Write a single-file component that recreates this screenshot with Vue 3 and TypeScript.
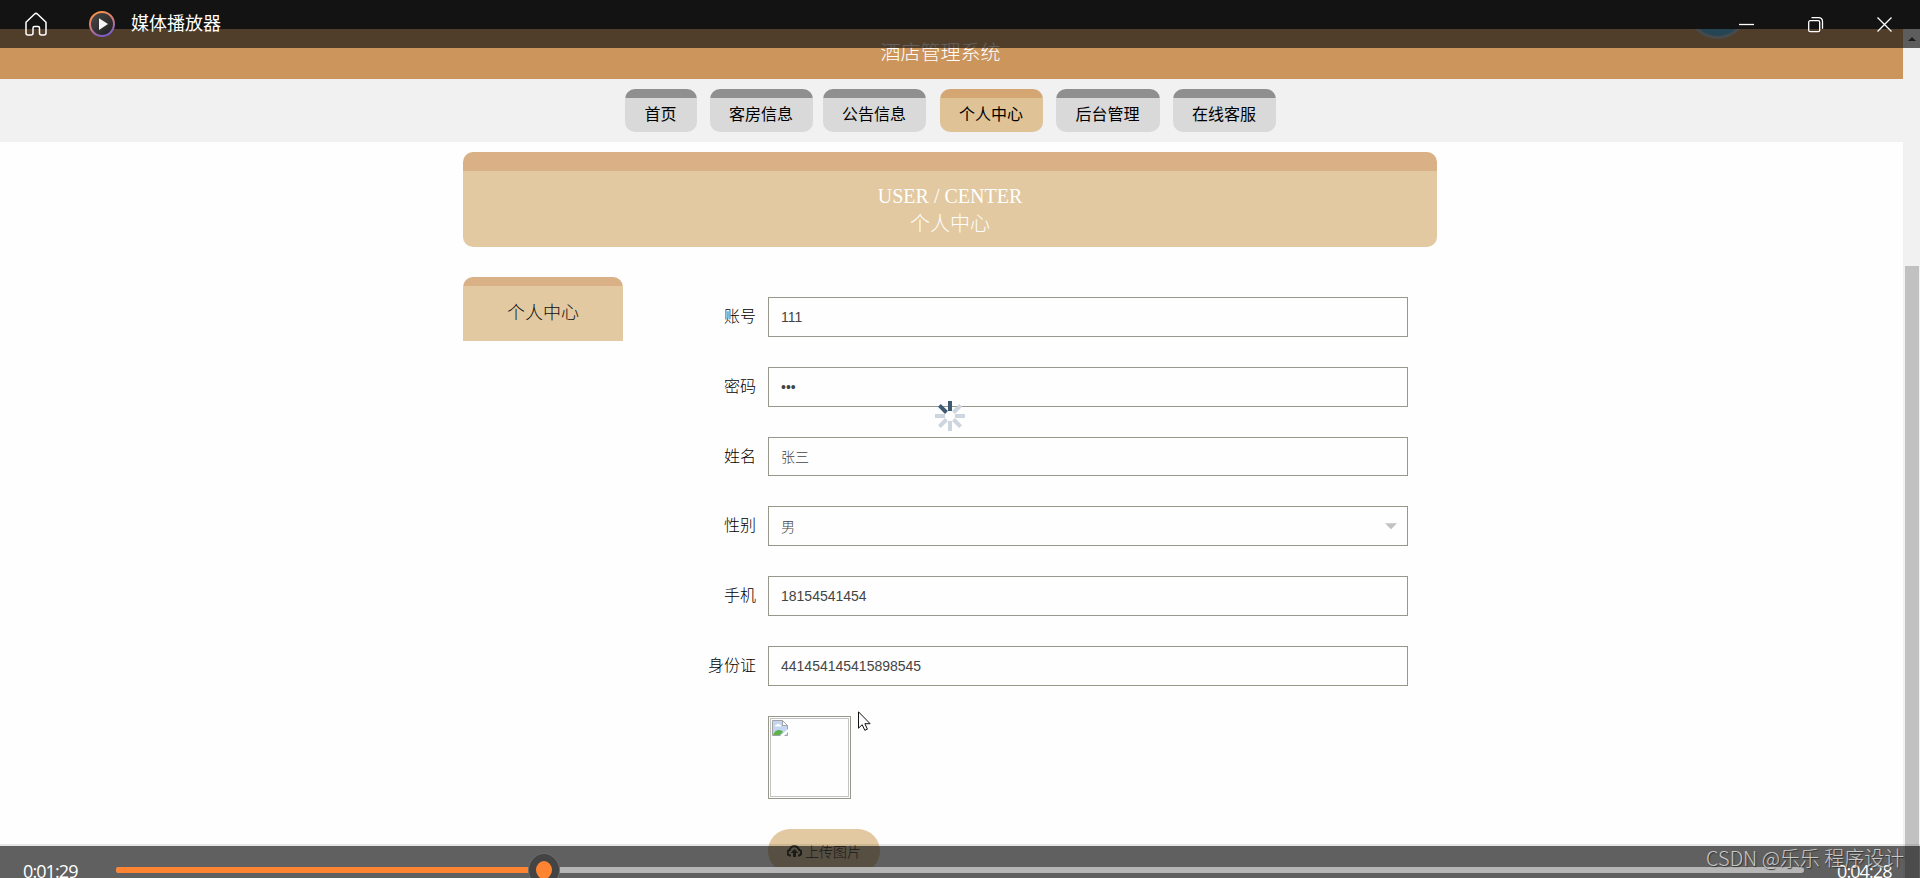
<script setup lang="ts">
interface Tab { label: string; active?: boolean }
interface Field { label: string; value: string; kind?: 'password' | 'select' }

const tabs: Tab[] = [
  { label: '首页' },
  { label: '客房信息' },
  { label: '公告信息' },
  { label: '个人中心', active: true },
  { label: '后台管理' },
  { label: '在线客服' },
]

const fields: Field[] = [
  { label: '账号', value: '111' },
  { label: '密码', value: '•••', kind: 'password' },
  { label: '姓名', value: '张三' },
  { label: '性别', value: '男', kind: 'select' },
  { label: '手机', value: '18154541454' },
  { label: '身份证', value: '441454145415898545' },
]

const spokes = [0, 45, 90, 135, 180, 225, 270, 315]
</script>

<template>
  <div class="screen">
    <div class="viewport">
      <main class="page">
        <header class="site-header">
          <span class="site-title">酒店管理系统</span>
          <span class="avatar"></span>
        </header>
        <nav class="nav">
          <a v-for="t in tabs" :key="t.label" class="tab" :class="{ active: t.active }">{{ t.label }}</a>
        </nav>
        <section class="banner">
          <div class="banner-en">USER / CENTER</div>
          <div class="banner-cn">个人中心</div>
        </section>
        <div class="columns">
          <aside class="side">个人中心</aside>
          <form class="form">
            <div v-for="f in fields" :key="f.label" class="row">
              <label class="label">{{ f.label }}</label>
              <div class="input" :class="f.kind">
                <span>{{ f.value }}</span>
                <i v-if="f.kind === 'select'" class="caret"></i>
              </div>
            </div>
            <div class="photo">
              <div class="photo-inner">
                <svg width="16" height="16" viewBox="0 0 16 16">
                  <path d="M.5.5h10l5 5v10H.5z" fill="#c3d5f2" stroke="#a3a3a3" />
                  <path d="M10.5.5v5h5z" fill="#fff" stroke="#a3a3a3" />
                  <path d="M3 6.500q0-2 2-2 1-1.500 2.500 0 1.500 0 1.500 2z" fill="#fff" />
                  <path d="M1 15q2-5 6-5 3 0 4 2l-3 3z" fill="#5cb347" />
                  <path d="M8 16l8-7v3l-4 4z" fill="#fff" />
                </svg>
              </div>
            </div>
            <div class="upload">
              <svg width="15" height="12" viewBox="0 0 15 12">
                <path d="M4 10.500H3A2.800 2.800 0 0 1 2.700 5 4.800 4.800 0 0 1 12 4.700a3 3 0 0 1 0 5.800h-1" fill="none" stroke="#2d2921" stroke-width="2.200" />
                <path d="M7.500 4l4 4H9v4H6V8H3.500z" fill="#2d2921" />
              </svg>
              <span>上传图片</span>
            </div>
          </form>
        </div>
      </main>
      <div class="scrollbar">
        <i class="arrow"></i>
        <i class="thumb"></i>
      </div>
    </div>

    <svg class="spinner" width="32" height="32" viewBox="-16 -16 32 32">
      <line v-for="a in spokes" :key="a" x1="0" y1="-5" x2="0" y2="-15" stroke-width="4"
        :stroke="a === 0 || a === 315 ? '#3d5b75' : '#cdd6df'" :transform="`rotate(${a})`" />
    </svg>

    <svg class="cursor" width="14" height="21" viewBox="0 0 14 21">
      <path d="M.5.8v16.400l3.700-3.500 2.600 5.600 2.600-1.100-2.500-5.500h5.200z" fill="#fff" stroke="#111" />
    </svg>

    <div class="titlebar">
      <svg class="home" width="24" height="25" viewBox="0 0 24 25">
        <path d="M2 10.300 10.600 2q1.400-1.200 2.800 0L22 10.300V21q0 2-2 2h-2.500q-2 0-2-2v-5q0-1.500-1.500-1.500h-3.500q-1.500 0-1.500 1.500v5q0 2-2 2H4q-2 0-2-2z" fill="none" stroke="#fff" stroke-width="1.500" stroke-linejoin="round" />
      </svg>
      <svg class="logo" width="26" height="26" viewBox="0 0 26 26">
        <defs>
          <linearGradient id="ring" x1=".2" y1="0" x2=".6" y2="1">
            <stop offset="0" stop-color="#ff9540" />
            <stop offset=".5" stop-color="#d07a83" />
            <stop offset="1" stop-color="#7d5bc8" />
          </linearGradient>
          <linearGradient id="disc" x1="0" y1="0" x2="1" y2="1">
            <stop offset="0" stop-color="#4a4a4a" />
            <stop offset="1" stop-color="#1d1d1d" />
          </linearGradient>
        </defs>
        <circle cx="13" cy="13" r="12" fill="url(#disc)" stroke="url(#ring)" stroke-width="2" />
        <path d="M10 7.300 19 13l-9 6z" fill="#f4f4f4" />
      </svg>
      <span class="app-name">媒体播放器</span>
      <svg class="controls" width="154" height="17" viewBox="0 0 154 17" fill="none" stroke="#fff" stroke-width="1.300">
        <path d="M0 8.500h15" />
        <rect x="69.700" y="4.700" width="11" height="11" rx="1.500" />
        <path d="M72.500 1.700h7q4 0 4 4v7" />
        <path d="M138.500 1.500l14 14m0-14l-14 14" />
      </svg>
    </div>

    <div class="player">
      <span class="time">0:01:29</span>
      <div class="track">
        <div class="played"></div>
        <div class="knob"></div>
      </div>
      <span class="time">0:04:28</span>
    </div>
    <div class="watermark"><span class="latin">CSDN @</span>乐乐 程序设计</div>
  </div>
</template>

<style>
body { margin: 0; background: #141414; overflow: hidden; }
</style>

<style scoped>
.screen {
  position: relative;
  width: 1920px;
  height: 878px;
  overflow: hidden;
  background: #141414;
  font-family: "Liberation Sans", "Noto Sans CJK SC", sans-serif;
  box-sizing: border-box;
  padding-top: 29px;
}
.screen * { box-sizing: border-box; }
.viewport { display: flex; height: 849px; background: #fefefe; }
.page { width: 1903px; height: 849px; overflow: hidden; }
.site-header {
  position: relative;
  height: 50px;
  overflow: hidden;
  background: #cb955c;
  text-align: center;
}
.site-title {
  display: block;
  width: 1881px;
  line-height: 30px;
  margin-top: 9px;
  font-size: 20px;
  font-weight: 300;
  color: #fff;
}
.avatar {
  position: absolute;
  left: 1687px;
  top: -51px;
  width: 61px;
  height: 61px;
  border-radius: 50%;
  background: #4ba7d8;
  border: 3px solid #b0b8bb;
}
.nav {
  display: flex;
  height: 63px;
  padding: 10px 0 0 625px;
  background: #f1f1f1;
}
.tab {
  height: 43px;
  padding: 9px 20px 0 19.500px;
  margin-right: 13px;
  border-radius: 10px;
  font-size: 16px;
  line-height: 34px;
  color: #000;
  white-space: nowrap;
  background: linear-gradient(#8f8f8f 9px, #d9d9d9 9px);
}
.tab:nth-child(2) { margin-right: 9.500px; }
.tab:nth-child(3) { margin-right: 13.500px; }
.tab.active { background: linear-gradient(#d4a674 9px, #dfc396 9px); }
.banner {
  width: 974px;
  height: 95px;
  margin: 10px 0 0 463px;
  padding-top: 30px;
  border-radius: 10px;
  background: linear-gradient(#dab086 19px, #e2c9a1 19px);
  color: #fff;
  text-align: center;
  font-family: "Liberation Serif", "Noto Sans CJK SC", serif;
  font-size: 20px;
  line-height: 28px;
}
.banner-cn { font-weight: 300; }
.columns { display: flex; margin: 30px 0 0 463px; }
.side {
  width: 160px;
  height: 64px;
  padding-top: 9px;
  border-radius: 10px 10px 0 0;
  background: linear-gradient(#dab086 9px, #e2c9a1 9px);
  font-size: 18px;
  font-weight: 300;
  line-height: 54px;
  text-align: center;
  color: #111;
}
.form { padding: 20px 0 0 65px; }
.row { display: flex; height: 39.750px; margin-bottom: 30px; }
.label {
  width: 80px;
  padding-right: 12px;
  text-align: right;
  font-size: 16px;
  font-weight: 300;
  line-height: 39px;
  color: #000;
}
.input {
  display: flex;
  align-items: center;
  justify-content: space-between;
  width: 640px;
  padding: 0 10px 0 12px;
  border: 1px solid #98978c;
  font-size: 14px;
  font-weight: 300;
  color: #444;
}
.caret {
  width: 12px;
  height: 6px;
  background: #c2c2c2;
  clip-path: polygon(0 0, 100% 0, 50% 100%);
}
.photo {
  width: 83px;
  height: 83px;
  margin: 0 0 30px 80px;
  padding: 1px;
  border: 1px solid #98978c;
}
.photo-inner { height: 79px; padding: 1px; border: 1px solid #c3c3c3; }
.photo-inner svg { display: block; }
.upload {
  display: flex;
  align-items: center;
  width: 112px;
  height: 44px;
  margin-left: 80px;
  padding-left: 19px;
  border-radius: 22px;
  background: #e2c9a1;
  font-size: 14px;
  font-weight: 300;
  color: #222;
}
.upload span { margin-left: 3px; }
.scrollbar { width: 17px; height: 849px; padding: 8px 2px 0; background: #f1f1f1; }
.arrow {
  display: block;
  width: 8px;
  height: 4px;
  margin-left: 3px;
  background: #333;
  clip-path: polygon(50% 0, 100% 100%, 0 100%);
}
.thumb { display: block; width: 14px; height: 612px; margin-top: 225px; background: #c1c1c1; }
.spinner { position: absolute; left: 934px; top: 400px; }
.cursor { position: absolute; left: 858px; top: 711px; }
.titlebar {
  position: absolute;
  inset: 0 0 auto 0;
  display: flex;
  align-items: center;
  height: 48px;
  padding: 0 27px 0 24px;
  background: rgba(20, 20, 20, 0.67);
}
.titlebar svg { flex: none; }
.logo { margin-left: 41px; }
.app-name { margin-left: 16px; font-size: 18px; color: #fff; line-height: 26px; }
.controls { margin-left: auto; }
.player {
  position: absolute;
  left: 0;
  top: 844px;
  display: flex;
  align-items: center;
  width: 1920px;
  height: 52px;
  padding: 0 23px;
  border-top: 2px solid rgba(20, 20, 20, 0.1);
  background: rgba(20, 20, 20, 0.68);
  background-clip: padding-box;
}
.time {
  width: 60px;
  font-family: "Open Sans", sans-serif;
  font-size: 18px;
  letter-spacing: -0.900px;
  color: #fff;
}
.track {
  display: flex;
  align-items: center;
  width: 1688px;
  height: 6px;
  margin: 0 33px;
  margin-top: -3px;
  border-radius: 3px;
  background: #b6b6b6;
}
.played { width: 413px; height: 6px; border-radius: 3px 0 0 3px; background: #ff8431; }
.knob {
  flex: none;
  width: 30px;
  height: 32px;
  border: 7px solid #444;
  border-radius: 50%;
  background: #ff8431;
  box-shadow: 0 0 0 1px #6a6a6a;
}
.watermark {
  position: absolute;
  left: 1706px;
  top: 843px;
  display: flex;
  white-space: pre;
  font-family: "Noto Sans CJK SC", sans-serif;
  font-size: 20px;
  font-weight: 300;
  line-height: 30px;
  color: #c8c8c8;
  text-shadow: 1px 1px 1px #333;
}
</style>
